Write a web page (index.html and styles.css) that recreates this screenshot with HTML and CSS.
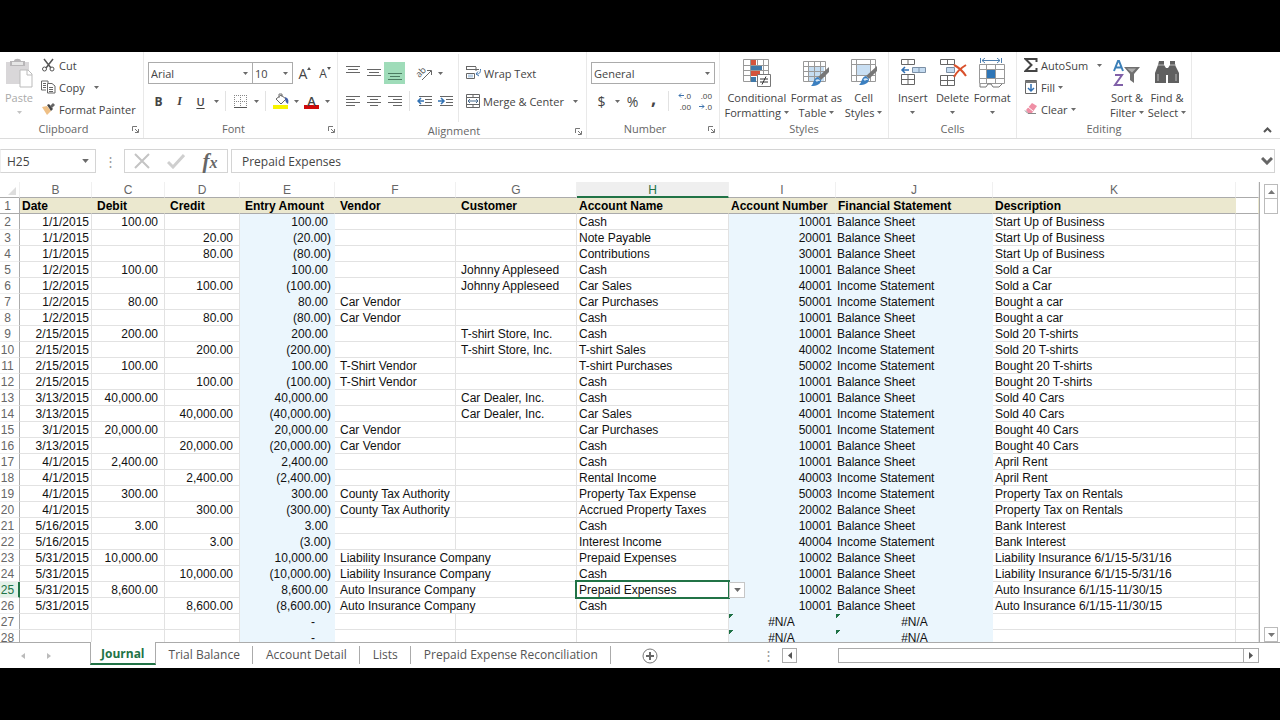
FILE: index.html
```html
<!DOCTYPE html>
<html lang="en">
<head>
<meta charset="utf-8">
<title>Journal</title>
<link rel="stylesheet" href="styles.css">
</head>
<body>
<svg class="defs" aria-hidden="true">
  <symbol id="down" viewBox="0 0 5 3"><path d="M0 0h5L2.500 3z" fill="#6a6a6a"/></symbol>
  <symbol id="launch" viewBox="0 0 7 7"><path d="M.5 5V.5H5M3 3l3 3M6.500 3v3.500H3" fill="none" stroke="#777"/></symbol>
  <symbol id="brush" viewBox="0 0 20 20"><path d="M19 0v5l-8 8-3-3z" fill="#777"/><path d="M8 10l3 3c0 4-4 6-10 6 3-2 2-8 7-9z" fill="#3b7fc0"/><path d="M6 14c1-1 3-1 3 0" stroke="#d5e6f5" stroke-width="2" fill="none"/></symbol>
</svg>
<main class="app">
  <section class="ribbon" aria-label="Home ribbon">
    <div class="group clipboard">
      <div class="group-body">
        <button class="big paste" disabled><svg width="28" height="30" viewBox="0 0 28 30"><path d="M1 4h23v22H1z" fill="#d9d7d9"/><path d="M5 3h4c0-3 7-3 7 0h4v5H5z" fill="#b8b6b8"/><path d="M7 4h11v3H7z" fill="#e6e6e6"/><path d="M15 12h8l4 4v13H15z" fill="#fff" stroke="#bbb"/><path d="M22 12v5h5" fill="none" stroke="#bbb"/></svg><span>Paste</span><svg class="arr"><use href="#down"/></svg></button>
        <div class="stack">
          <button class="small"><svg width="15" height="14" viewBox="0 0 15 14"><path d="M3 1l7 9M12 1L5 10" stroke="#555" stroke-width="1.500"/><circle cx="3.500" cy="11" r="2" fill="none" stroke="#555"/><circle cx="11" cy="11" r="2" fill="none" stroke="#555"/></svg>Cut</button>
          <button class="small"><svg width="15" height="14" viewBox="0 0 15 14"><path d="M7 3V1H.5v9H5M2 3.500h3M2 5.500h3M2 7.500h3" fill="none" stroke="#666"/><path d="M6.500 3.500H11L14 6v7H6.500z" fill="#fff" stroke="#666"/><path d="M8 7.500h4M8 9.500h4M8 11.500h4" stroke="#666"/></svg>Copy<svg class="arr gap"><use href="#down"/></svg></button>
          <button class="small"><svg width="15" height="14" viewBox="0 0 15 14"><path d="M1 5l5-1 4 5-4 4z" fill="#efc086"/><path d="M6 3l2-1 4 5-2 2z" fill="#444"/><path d="M9 4l3-3 2 2-3 3z" fill="#666"/></svg>Format Painter</button>
        </div>
      </div>
      <div class="group-label">Clipboard<svg class="launch"><use href="#launch"/></svg></div>
    </div>
    <div class="group font">
      <div class="rows">
        <div class="row">
          <span class="combo face"><select aria-label="Font"><option>Arial</option></select><svg class="arr"><use href="#down"/></svg></span>
          <span class="combo size"><select aria-label="Font size"><option>10</option></select><svg class="arr"><use href="#down"/></svg></span>
          <button class="ico" aria-label="Increase font size"><span class="grow">A</span><svg width="4" height="12" viewBox="0 0 4 12"><path d="M0 3h4L2 0z" fill="#555"/></svg></button>
          <button class="ico" aria-label="Decrease font size"><span class="shrink">A</span><svg width="4" height="12" viewBox="0 0 4 12"><path d="M0 0h4L2 3z" fill="#555"/></svg></button>
        </div>
        <div class="row">
          <button class="ico bold">B</button><button class="ico ital">I</button><button class="ico under">U</button><button class="drop" aria-label="Underline styles"><svg class="arr"><use href="#down"/></svg></button>
          <span class="sep"></span>
          <button class="ico" aria-label="Borders"><svg width="13" height="13" viewBox="0 0 13 13"><path d="M.5 0v12M6.500 0v12M12.500 0v12M0 .5h13M0 6.500h13" stroke="#888" stroke-dasharray="1 1"/><path d="M0 12.500h13" stroke="#555"/></svg></button><button class="drop" aria-label="Border styles"><svg class="arr"><use href="#down"/></svg></button>
          <span class="sep"></span>
          <button class="ico" aria-label="Fill colour"><svg width="16" height="16" viewBox="0 0 16 16"><path d="M3 6l5-4 5 4-5 5z" fill="#fff" stroke="#666"/><path d="M6 5V1h3v3" fill="none" stroke="#777"/><path d="M12 4c3 1 4 3 3 7-2-1-3-3-3-7z" fill="#4460a8"/><path d="M0 12h15v4H0z" fill="#f8f400"/></svg></button><button class="drop" aria-label="Fill colours"><svg class="arr"><use href="#down"/></svg></button>
          <button class="ico color" aria-label="Font colour">A</button><button class="drop" aria-label="Font colours"><svg class="arr"><use href="#down"/></svg></button>
        </div>
      </div>
      <div class="group-label">Font<svg class="launch"><use href="#launch"/></svg></div>
    </div>
    <div class="group align">
      <div class="group-body">
        <div class="rows left">
          <div class="row">
            <button class="ico" aria-label="Top align"><svg width="14" height="18" viewBox="0 0 14 18"><path d="M0 2.500h14M2 5.500h10M0 8.500h14" stroke="#666"/></svg></button><button class="ico" aria-label="Middle align"><svg width="14" height="18" viewBox="0 0 14 18"><path d="M0 5.500h14M2 8.500h10M0 11.500h14" stroke="#666"/></svg></button><button class="ico on" aria-label="Bottom align"><svg width="14" height="18" viewBox="0 0 14 18"><path d="M0 9.500h14M2 12.500h10M0 15.500h14" stroke="#4b7c62"/></svg></button>
            <span class="sep none"></span>
            <button class="ico" aria-label="Orientation"><svg width="18" height="18" viewBox="0 0 18 18"><text x="2" y="13" transform="rotate(-45 4 12)" class="ab">ab</text><path d="M6 16l9-9M15.500 11V6.500H11" fill="none" stroke="#666"/></svg></button><button class="drop" aria-label="Orientations"><svg class="arr"><use href="#down"/></svg></button>
          </div>
          <div class="row">
            <button class="ico" aria-label="Align left"><svg width="14" height="12" viewBox="0 0 14 12"><path d="M0 1.500h14M0 4.500h9M0 7.500h14M0 10.500h9" stroke="#666"/></svg></button><button class="ico" aria-label="Center"><svg width="14" height="12" viewBox="0 0 14 12"><path d="M0 1.500h14M3 4.500h8M0 7.500h14M3 10.500h8" stroke="#666"/></svg></button><button class="ico" aria-label="Align right"><svg width="14" height="12" viewBox="0 0 14 12"><path d="M0 1.500h14M5 4.500h9M0 7.500h14M5 10.500h9" stroke="#666"/></svg></button>
            <span class="sep"></span>
            <button class="ico" aria-label="Decrease indent"><svg width="15" height="12" viewBox="0 0 15 12"><path d="M2 1.500h13M8 4.500h7M8 7.500h7M2 10.500h13" stroke="#666"/><path d="M7 6H1M4 3L1 6l3 3" fill="none" stroke="#3272b4" stroke-width="1.500"/></svg></button><button class="ico" aria-label="Increase indent"><svg width="15" height="12" viewBox="0 0 15 12"><path d="M2 1.500h13M8 4.500h7M8 7.500h7M2 10.500h13" stroke="#666"/><path d="M0 6h6M3 3l3 3-3 3" fill="none" stroke="#3272b4" stroke-width="1.500"/></svg></button>
          </div>
        </div>
        <div class="rows right">
          <div class="row"><button class="small"><svg width="15" height="14" viewBox="0 0 15 14"><path d="M0 .5h10M.5 0v4M1 3.500h12M10 1v4M.5 7.500h8v5h-8z" fill="none" stroke="#666"/><path d="M2 8.500h5v3H2z" fill="#b8cfe6"/><path d="M14.500 3c0 4-1 5-4 5M12 5.500L10 8l3 2" fill="none" stroke="#3f74ae"/></svg>Wrap Text</button></div>
          <div class="row"><button class="small"><svg width="14" height="14" viewBox="0 0 14 14"><path d="M.5.5h13v13H.5zM0 3.500h14M0 10.500h14M7 0v3M7 11v3" fill="none" stroke="#666"/><path d="M2 7h10M4 5L2 7l2 2M10 5l2 2-2 2" fill="none" stroke="#45688c"/></svg>Merge &amp; Center<svg class="arr gap"><use href="#down"/></svg></button></div>
        </div>
      </div>
      <div class="group-label">Alignment<svg class="launch"><use href="#launch"/></svg></div>
    </div>
    <div class="group number">
      <div class="rows">
        <div class="row"><span class="combo format"><select aria-label="Number format"><option>General</option></select><svg class="arr"><use href="#down"/></svg></span></div>
        <div class="row">
          <button class="ico sym">$</button><button class="drop" aria-label="Currencies"><svg class="arr"><use href="#down"/></svg></button><button class="ico sym">%</button><button class="ico comma">,</button>
          <span class="sep"></span>
          <button class="ico dec" aria-label="Increase decimal"><span><svg width="6" height="5" viewBox="0 0 6 5"><path d="M6 2.500H1M3 .5l-2 2 2 2" fill="none" stroke="#3f74ae"/></svg>.0</span><span>.00</span></button><button class="ico dec" aria-label="Decrease decimal"><span>.00</span><span><svg width="6" height="5" viewBox="0 0 6 5"><path d="M0 2.500h5M3 .5l2 2-2 2" fill="none" stroke="#3f74ae"/></svg>.0</span></button>
        </div>
      </div>
      <div class="group-label">Number<svg class="launch"><use href="#launch"/></svg></div>
    </div>
    <div class="group styles">
      <div class="group-body">
        <button class="big cond"><svg width="30" height="30" viewBox="0 0 30 30"><path d="M1.500 1.500h25v22h-25zM1 7.500h26M1 12.500h26M1 17.500h26M8.500 1v22M15.500 1v22M21.500 1v22" fill="none" stroke="#999"/><path d="M9 2h5v5H9zM9 13h9v5H9z" fill="#d5533b"/><path d="M9 8h11v4H9zM9 19h5v5H9z" fill="#3f78a8"/><path d="M15.500 16.500h13v12h-13z" fill="#fff" stroke="#777"/><path d="M18 21h8M18 24h8M24 18.500l-4 8" stroke="#333"/></svg><span>Conditional</span><span>Formatting<svg class="arr"><use href="#down"/></svg></span></button>
        <button class="big fmt"><svg width="30" height="30" viewBox="0 0 30 30"><path d="M8 8h15v16H8z" fill="#c5ddf2"/><path d="M2.500 3.500h22v20h-22zM2 8.500h23M2 13.500h23M2 18.500h23M7.500 3v20M13.500 3v20M19.500 3v20" fill="none" stroke="#999"/><use href="#brush" x="9" y="9" width="20" height="20"/></svg><span>Format as</span><span>Table<svg class="arr"><use href="#down"/></svg></span></button>
        <button class="big cell"><svg width="30" height="30" viewBox="0 0 30 30"><path d="M8 7h14v10H8z" fill="#c9dff3"/><path d="M2.500 1.500h24v22h-24zM2 6.500h25M2 17.500h25M7.500 1v22M21.500 1v22" fill="none" stroke="#999"/><use href="#brush" x="9" y="8" width="20" height="20"/></svg><span>Cell</span><span>Styles<svg class="arr"><use href="#down"/></svg></span></button>
      </div>
      <div class="group-label">Styles</div>
    </div>
    <div class="group cells">
      <div class="group-body">
        <button class="big"><svg width="30" height="30" viewBox="0 0 30 30"><path d="M3.500 1.500h13v5h-13zM10 1v6M3.500 16.500h13v10h-13zM3 21.500h14M10 16v11" fill="none" stroke="#666"/><path d="M14.500 9.500h13v5h-13z" fill="#c3daf0" stroke="#7b8fa5"/><path d="M21 9v6" stroke="#7b8fa5"/><path d="M11 12H4M7 9l-3 3 3 3" fill="none" stroke="#2f6fb2" stroke-width="1.500"/></svg><span>Insert</span><svg class="arr low"><use href="#down"/></svg></button>
        <button class="big"><svg width="30" height="30" viewBox="0 0 30 30"><path d="M2.500 1.500h14v5h-14zM9.500 1v6M2.500 17.500h14v10h-14zM2 22.500h15M9.500 17v11" fill="none" stroke="#666"/><path d="M8.500 9.500h8v5h-8z" fill="#c3daf0" stroke="#7b8fa5"/><path d="M16 7c4 2 8 5 12 11M28 7c-5 3-9 6-12 12" fill="none" stroke="#d9512c" stroke-width="2"/></svg><span>Delete</span><svg class="arr low"><use href="#down"/></svg></button>
        <button class="big"><svg width="30" height="30" viewBox="0 0 30 30"><path d="M3.500 0v5M24.500 0v5M5 2.500h18M8 0L5 2.500 8 5M20 0l3 2.500L20 5" fill="none" stroke="#4e7fb0"/><path d="M2.500 6.500h25v19h-25zM2 11.500h26M2 20.500h26M9.500 6v20M18.500 6v20" fill="none" stroke="#999"/><path d="M10 12h8v8h-8z" fill="#2e75b6"/><path d="M3 26v3h6l2-3h3l2 3h6l3-3" fill="#fff" stroke="#777"/></svg><span>Format</span><svg class="arr low"><use href="#down"/></svg></button>
      </div>
      <div class="group-label">Cells</div>
    </div>
    <div class="group editing">
      <div class="group-body">
        <div class="stack">
          <button class="small"><svg width="14" height="14" viewBox="0 0 14 14"><path d="M12.500 4V1H1.500l6 6-6 6h11v-3" fill="none" stroke="#444" stroke-width="2"/></svg>AutoSum<svg class="arr gap"><use href="#down"/></svg></button>
          <button class="small"><svg width="14" height="14" viewBox="0 0 14 14"><path d="M1.500.5h11v13h-11z" fill="#fff" stroke="#666"/><path d="M1 1h12v2H1z" fill="#777"/><path d="M7 4v7M4 8l3 3 3-3" fill="none" stroke="#2f6fb2" stroke-width="1.500"/></svg>Fill<svg class="arr"><use href="#down"/></svg></button>
          <button class="small"><svg width="14" height="14" viewBox="0 0 14 14"><path d="M8 1l5 3-5 7H4L2 8z" fill="#ef8fa5"/><path d="M4 5l5 4" stroke="#fff"/><path d="M1 8.500l3 3h8" fill="none" stroke="#888"/></svg>Clear<svg class="arr"><use href="#down"/></svg></button>
        </div>
        <button class="big"><svg width="30" height="30" viewBox="0 0 30 30"><path d="M2 13L6 3h1l4 10M3.500 9.500h6" fill="none" stroke="#3b7fb8" stroke-width="2"/><path d="M3 17h7L3 27h8" fill="none" stroke="#8060a8" stroke-width="2"/><path d="M12 9h16l-6 7v9l-4-3v-6z" fill="#707070"/><path d="M15 10.500h9l-4 4z" fill="#ababab"/></svg><span>Sort &amp;</span><span>Filter<svg class="arr"><use href="#down"/></svg></span></button>
        <button class="big"><svg width="30" height="30" viewBox="0 0 30 30"><path d="M7 3h5v4l2 3v15H3V15l3-8zM18 3h5v4l4 8v10H16V10l2-3z" fill="#606060"/><path d="M13 10h4v7h-4z" fill="#606060"/><path d="M6 7h6M18 7h6M6 16v7M24 16v7" stroke="#bbb"/></svg><span>Find &amp;</span><span>Select<svg class="arr"><use href="#down"/></svg></span></button>
      </div>
      <div class="group-label">Editing</div>
    </div>
    <button class="collapse" aria-label="Collapse ribbon"><svg width="9" height="6" viewBox="0 0 9 6"><path d="M1 5l3.500-3.500L8 5" fill="none" stroke="#555" stroke-width="2"/></svg></button>
  </section>

  <section class="formula" aria-label="Formula bar">
    <span class="name-box"><input aria-label="Name box" value="H25"><svg class="arr wide"><use href="#down"/></svg></span>
    <span class="dots">⋮</span>
    <span class="fx-box">
      <button aria-label="Cancel"><svg width="16" height="16" viewBox="0 0 16 16"><path d="M1 1l14 14M15 1L1 15" stroke="#c4c4c4" stroke-width="2"/></svg></button>
      <button aria-label="Enter"><svg width="18" height="16" viewBox="0 0 18 16"><path d="M1 9l5 5L17 2" fill="none" stroke="#cfcfcf" stroke-width="3"/></svg></button>
      <button class="fx" aria-label="Insert function">f<small>x</small></button>
    </span>
    <span class="entry"><input aria-label="Formula" value="Prepaid Expenses"><svg width="12" height="8" viewBox="0 0 12 8"><path d="M1 1l5 5 5-5" fill="none" stroke="#666" stroke-width="3"/></svg></span>
  </section>

  <section class="workspace">
    <div class="sheet">
      <table>
        <colgroup><col class="c-row"><col class="c-b"><col class="c-c"><col class="c-d"><col class="c-e"><col class="c-f"><col class="c-f"><col class="c-h"><col class="c-i"><col class="c-j"><col class="c-k"><col></colgroup>
        <thead><tr><th><svg class="corner" width="8" height="8" viewBox="0 0 8 8"><path d="M8 0v8H0z" fill="#ddd"/></svg></th><th>B</th><th>C</th><th>D</th><th>E</th><th>F</th><th>G</th><th class="active">H</th><th>I</th><th>J</th><th>K</th><th></th></tr></thead>
        <tbody>
        <tr class="titles"><th>1<td>Date<td class="t">Debit<td class="t">Credit<td class="t">Entry Amount<td class="t">Vendor<td class="t">Customer<td>Account Name<td>Account Number<td>Financial Statement<td>Description<td class="blank"></tr>
        <tr><th>2<td class="d">1/1/2015<td class="a">100.00<td><td class="e">100.00<td><td><td>Cash<td class="i">10001<td class="j">Balance Sheet<td>Start Up of Business<td></tr>
        <tr><th>3<td class="d">1/1/2015<td><td class="a">20.00<td class="e neg">(20.00)<td><td><td>Note Payable<td class="i">20001<td class="j">Balance Sheet<td>Start Up of Business<td></tr>
        <tr><th>4<td class="d">1/1/2015<td><td class="a">80.00<td class="e neg">(80.00)<td><td><td>Contributions<td class="i">30001<td class="j">Balance Sheet<td>Start Up of Business<td></tr>
        <tr><th>5<td class="d">1/2/2015<td class="a">100.00<td><td class="e">100.00<td><td class="t">Johnny Appleseed<td>Cash<td class="i">10001<td class="j">Balance Sheet<td>Sold a Car<td></tr>
        <tr><th>6<td class="d">1/2/2015<td><td class="a">100.00<td class="e neg">(100.00)<td><td class="t">Johnny Appleseed<td>Car Sales<td class="i">40001<td class="j">Income Statement<td>Sold a Car<td></tr>
        <tr><th>7<td class="d">1/2/2015<td class="a">80.00<td><td class="e">80.00<td class="t">Car Vendor<td><td>Car Purchases<td class="i">50001<td class="j">Income Statement<td>Bought a car<td></tr>
        <tr><th>8<td class="d">1/2/2015<td><td class="a">80.00<td class="e neg">(80.00)<td class="t">Car Vendor<td><td>Cash<td class="i">10001<td class="j">Balance Sheet<td>Bought a car<td></tr>
        <tr><th>9<td class="d">2/15/2015<td class="a">200.00<td><td class="e">200.00<td><td class="t">T-shirt Store, Inc.<td>Cash<td class="i">10001<td class="j">Balance Sheet<td>Sold 20 T-shirts<td></tr>
        <tr><th>10<td class="d">2/15/2015<td><td class="a">200.00<td class="e neg">(200.00)<td><td class="t">T-shirt Store, Inc.<td>T-shirt Sales<td class="i">40002<td class="j">Income Statement<td>Sold 20 T-shirts<td></tr>
        <tr><th>11<td class="d">2/15/2015<td class="a">100.00<td><td class="e">100.00<td class="t">T-Shirt Vendor<td><td>T-shirt Purchases<td class="i">50002<td class="j">Income Statement<td>Bought 20 T-shirts<td></tr>
        <tr><th>12<td class="d">2/15/2015<td><td class="a">100.00<td class="e neg">(100.00)<td class="t">T-Shirt Vendor<td><td>Cash<td class="i">10001<td class="j">Balance Sheet<td>Bought 20 T-shirts<td></tr>
        <tr><th>13<td class="d">3/13/2015<td class="a">40,000.00<td><td class="e">40,000.00<td><td class="t">Car Dealer, Inc.<td>Cash<td class="i">10001<td class="j">Balance Sheet<td>Sold 40 Cars<td></tr>
        <tr><th>14<td class="d">3/13/2015<td><td class="a">40,000.00<td class="e neg">(40,000.00)<td><td class="t">Car Dealer, Inc.<td>Car Sales<td class="i">40001<td class="j">Income Statement<td>Sold 40 Cars<td></tr>
        <tr><th>15<td class="d">3/1/2015<td class="a">20,000.00<td><td class="e">20,000.00<td class="t">Car Vendor<td><td>Car Purchases<td class="i">50001<td class="j">Income Statement<td>Bought 40 Cars<td></tr>
        <tr><th>16<td class="d">3/13/2015<td><td class="a">20,000.00<td class="e neg">(20,000.00)<td class="t">Car Vendor<td><td>Cash<td class="i">10001<td class="j">Balance Sheet<td>Bought 40 Cars<td></tr>
        <tr><th>17<td class="d">4/1/2015<td class="a">2,400.00<td><td class="e">2,400.00<td><td><td>Cash<td class="i">10001<td class="j">Balance Sheet<td>April Rent<td></tr>
        <tr><th>18<td class="d">4/1/2015<td><td class="a">2,400.00<td class="e neg">(2,400.00)<td><td><td>Rental Income<td class="i">40003<td class="j">Income Statement<td>April Rent<td></tr>
        <tr><th>19<td class="d">4/1/2015<td class="a">300.00<td><td class="e">300.00<td class="t">County Tax Authority<td><td>Property Tax Expense<td class="i">50003<td class="j">Income Statement<td>Property Tax on Rentals<td></tr>
        <tr><th>20<td class="d">4/1/2015<td><td class="a">300.00<td class="e neg">(300.00)<td class="t">County Tax Authority<td><td>Accrued Property Taxes<td class="i">20002<td class="j">Balance Sheet<td>Property Tax on Rentals<td></tr>
        <tr><th>21<td class="d">5/16/2015<td class="a">3.00<td><td class="e">3.00<td><td><td>Cash<td class="i">10001<td class="j">Balance Sheet<td>Bank Interest<td></tr>
        <tr><th>22<td class="d">5/16/2015<td><td class="a">3.00<td class="e neg">(3.00)<td><td><td>Interest Income<td class="i">40004<td class="j">Income Statement<td>Bank Interest<td></tr>
        <tr><th>23<td class="d">5/31/2015<td class="a">10,000.00<td><td class="e">10,000.00<td class="t" colspan="2">Liability Insurance Company<td>Prepaid Expenses<td class="i">10002<td class="j">Balance Sheet<td>Liability Insurance 6/1/15-5/31/16<td></tr>
        <tr><th>24<td class="d">5/31/2015<td><td class="a">10,000.00<td class="e neg">(10,000.00)<td class="t" colspan="2">Liability Insurance Company<td>Cash<td class="i">10001<td class="j">Balance Sheet<td>Liability Insurance 6/1/15-5/31/16<td></tr>
        <tr class="current"><th>25<td class="d">5/31/2015<td class="a">8,600.00<td><td class="e">8,600.00<td class="t" colspan="2">Auto Insurance Company<td class="selected">Prepaid Expenses<button class="pick" aria-label="Choose account"><svg class="arr wide"><use href="#down"/></svg></button><td class="i">10002<td class="j">Balance Sheet<td>Auto Insurance 6/1/15-11/30/15<td></tr>
        <tr><th>26<td class="d">5/31/2015<td><td class="a">8,600.00<td class="e neg">(8,600.00)<td class="t" colspan="2">Auto Insurance Company<td>Cash<td class="i">10001<td class="j">Balance Sheet<td>Auto Insurance 6/1/15-11/30/15<td></tr>
        <tr><th>27<td><td><td><td class="e dash">-<td><td><td><td class="i na">#N/A<td class="j na">#N/A<td><td></tr>
        <tr><th>28<td><td><td><td class="e dash">-<td><td><td><td class="i na">#N/A<td class="j na">#N/A<td><td></tr>
        </tbody>
      </table>
    </div>
    <div class="vscroll">
      <button aria-label="Scroll up"><svg width="7" height="4" viewBox="0 0 7 4"><path d="M0 4h7L3.500 0z" fill="#777"/></svg></button>
      <span class="thumb"></span>
      <button class="end" aria-label="Scroll down"><svg width="7" height="4" viewBox="0 0 7 4"><path d="M0 0h7L3.500 4z" fill="#777"/></svg></button>
    </div>
  </section>

  <footer class="tabs">
    <div class="tab-nav">
      <button aria-label="Previous sheet"><svg width="4" height="6" viewBox="0 0 4 6"><path d="M4 0v6L0 3z" fill="#bbb"/></svg></button>
      <button aria-label="Next sheet"><svg width="4" height="6" viewBox="0 0 4 6"><path d="M0 0v6l4-3z" fill="#bbb"/></svg></button>
    </div>
    <button class="tab current-tab">Journal</button>
    <button class="tab">Trial Balance</button>
    <button class="tab">Account Detail</button>
    <button class="tab">Lists</button>
    <button class="tab">Prepaid Expense Reconciliation</button>
    <button class="add" aria-label="New sheet"><svg width="16" height="16" viewBox="0 0 16 16"><circle cx="8" cy="8" r="7" fill="none" stroke="#777"/><path d="M8 4v8M4 8h8" stroke="#666" stroke-width="2"/></svg></button>
    <div class="hscroll">
      <span class="dots">⋮</span>
      <button aria-label="Scroll left"><svg width="4" height="7" viewBox="0 0 4 7"><path d="M4 0v7L0 3.500z" fill="#555"/></svg></button>
      <span class="bar"></span>
      <button class="end" aria-label="Scroll right"><svg width="4" height="7" viewBox="0 0 4 7"><path d="M0 0v7l4-3.500z" fill="#555"/></svg></button>
    </div>
  </footer>
</main>
</body>
</html>
```
FILE: styles.css
```css
* { box-sizing: border-box; }
body {
  margin: 0;
  height: 100vh;
  padding: 52px 0;
  background: #000;
  display: flex;
  flex-direction: column;
  font: 11px/15px "Open Sans", "Noto Sans", sans-serif;
  color: #444;
}
button, input, select { font: inherit; color: inherit; border: 0; background: none; padding: 0; margin: 0; }
button { display: flex; align-items: center; justify-content: center; white-space: nowrap; }
svg { flex: none; display: block; }
.defs { position: absolute; width: 0; height: 0; }
.arr { width: 5px; height: 3px; }
.arr.wide { width: 7px; height: 4px; }
.launch { width: 7px; height: 7px; }
.app { flex: 1; min-height: 0; background: #fff; display: flex; flex-direction: column; }

/* Ribbon */
.ribbon { display: flex; border-bottom: 1px solid #dcdcdc; height: 87px; flex: none; }
.group { display: flex; flex-direction: column; border-right: 1px solid #e9e9e9; padding: 2px 4px 0; flex: none; }
.group-body { display: flex; height: 68px; }
.group-label { position: relative; text-align: center; color: #666; line-height: 18px; }
.group-label:has(.launch) { padding-right: 16px; }
.group-label .launch { position: absolute; right: 0; top: 6px; }
.clipboard { width: 144px; }
.font { width: 194px; padding-right: 2px; }
.align { width: 249px; }
.number { width: 133px; }
.styles { width: 169px; }
.cells { width: 128px; }
.editing { width: 175px; }
.stack { display: flex; flex-direction: column; }
.small { height: 22px; gap: 3px; justify-content: flex-start; }
.small .gap { margin-left: 6px; }
.clipboard .stack { padding-left: 7px; }
.big { flex-direction: column; justify-content: flex-start; padding-top: 4px; color: #444; }
.big > svg:first-child { margin-bottom: 2px; }
.big span { display: flex; align-items: center; gap: 3px; }
.big .low { margin-top: 6px; }
.paste { width: 30px; color: #aaa; }
.paste .arr { margin-top: 6px; opacity: 0.4; }
.cond { width: 66px; }
.fmt { width: 54px; }
.cell { width: 41px; }
.cells .big, .editing .big { width: 40px; }
.editing .stack { width: 86px; padding-left: 3px; }
.rows { display: flex; flex-direction: column; height: 68px; padding-top: 8px; gap: 6px; }
.row { display: flex; height: 22px; align-items: center; }
.ico { width: 21px; height: 22px; }
.drop { width: 10px; height: 22px; }
.sep { width: 9px; height: 20px; background: linear-gradient(#e2e2e2, #e2e2e2) center / 1px 100% no-repeat; }
.sep.none { background: none; }
.combo { display: flex; align-items: center; border: 1px solid #ababab; height: 22px; padding: 0 4px 0 2px; flex: none; }
.combo + .combo { border-left: 0; margin-right: 2px; }
.combo select { appearance: none; flex: 1; width: 0; outline: 0; }
.face { width: 105px; }
.size { width: 40px; }
.format { width: 124px; }
.grow { font-size: 14px; }
.shrink { font-size: 12px; }
.bold { font-weight: 700; font-size: 12px; }
.ital { font: italic 700 12px "Liberation Serif", serif; }
.under { font-weight: 600; text-decoration: underline; text-underline-offset: 2px; }
.color { font-weight: 600; font-size: 13px; line-height: 12px; background: linear-gradient(#d00a0a, #d00a0a) 3px 15px / 15px 4px no-repeat; }
.on { background: #9fdcb9; }
.ab { font: 9px "Open Sans", sans-serif; fill: #555; }
.left { width: 117px; border-right: 1px solid #e8e8e8; }
.right { padding-left: 7px; }
.sym { font-size: 14px; }
.comma { font-size: 18px; font-weight: 700; line-height: 10px; padding-bottom: 6px; }
.dec { flex-direction: column; align-items: flex-end; font-size: 8px; line-height: 11px; padding-right: 3px; }
.dec span { display: flex; align-items: center; }
.collapse { margin-left: auto; align-self: flex-end; width: 26px; height: 16px; }

/* Formula bar */
.formula { display: flex; align-items: center; padding: 10px 5px 9px 0; flex: none; font-size: 12px; }
.name-box, .fx-box, .entry { display: flex; align-items: center; height: 24px; border: 1px solid #d4d4d4; }
.name-box { width: 96px; padding: 0 6px; border-left-color: #eee; }
.name-box input, .entry input { flex: 1; width: 0; outline: 0; }
.dots { width: 28px; text-align: center; color: #999; font-size: 13px; }
.fx-box { width: 104px; margin-right: 3px; }
.fx-box button { flex: 1; }
.fx { font: italic 700 21px/20px "Liberation Serif", serif; color: #666; }
.fx small { font-size: 16px; margin-top: 4px; }
.entry { flex: 1; padding: 0 1px 0 10px; font-size: 12px; }

/* Sheet */
.workspace { display: flex; flex: 1; min-height: 0; }
.sheet { flex: 1; min-width: 0; overflow: hidden; border-right: 1px solid #ababab; font: 12px/13px "Liberation Sans", Arial, sans-serif; color: #111; }
table { table-layout: fixed; width: 100%; border-collapse: separate; border-spacing: 0; }
.c-row { width: 20px; }
.c-b { width: 72px; }
.c-c { width: 73px; }
.c-d { width: 75px; }
.c-e { width: 95px; }
.c-f { width: 121px; }
.c-h { width: 152px; }
.c-i { width: 107px; }
.c-j { width: 157px; }
.c-k { width: 243px; }
th, td { height: 16px; padding: 2px 0 0; white-space: nowrap; border-right: 1px solid #e2e2e2; border-bottom: 1px solid #e2e2e2; }
th { font-weight: 400; color: #666; text-align: center; }
thead th { border-right-color: #f0f0f0; border-bottom-color: #ababab; }
thead .active { background: #efefef; color: #217346; border-bottom: 2px solid #217346; line-height: 12px; }
.corner { margin-left: 8px; }
tbody th { border-right-color: #ababab; border-bottom-color: #eee; padding-right: 4px; }
td { padding-left: 2px; text-align: left; }
.titles td { font-weight: 700; color: #000; background: #ebe8cf; border-right-color: #ebe8cf; border-bottom-color: #ababab; }
.titles .blank { background: #fff; }
.titles th { border-bottom-color: #ababab; }
td.t { padding-left: 5px; }
.d, .a, .e, .i { text-align: right; }
.d { padding-right: 2px; }
.a, .e { padding-right: 6px; }
.e, .i, .j { background: #ebf6fd; border-color: #ebf6fd; }
.neg, .i { padding-right: 3px; }
.dash { padding-right: 19px; }
.j { padding-left: 1px; }
.na { text-align: center; background: linear-gradient(135deg, #1e7145 3px, transparent 3px) no-repeat #ebf6fd; }
.current th { color: #217346; background: #e3f1e8; border-right: 2px solid #217346; padding-right: 3px; }
.selected { position: relative; }
.selected::after { content: ""; position: absolute; inset: -2px -2px -2px -2px; border: 2px solid #217346; }
.pick { position: absolute; left: 100%; top: 0; width: 16px; height: 16px; margin-left: 1px; background: #fff; border: 1px solid #c6c6c6; z-index: 1; }
.vscroll { width: 20px; flex: none; display: flex; flex-direction: column; align-items: center; padding: 2px 0 0 2px; }
.vscroll button, .thumb { width: 14px; height: 15px; border: 1px solid #bbb; }
.vscroll .thumb { border-top: 0; }
.vscroll .end { margin-top: auto; }

/* Sheet tabs */
.tabs { display: flex; align-items: stretch; height: 26px; flex: none; border-top: 1px solid #ababab; font-size: 12px; }
.tab-nav { display: flex; width: 90px; padding-left: 10px; }
.tab-nav button { width: 26px; }
.tab { position: relative; padding: 0 13px 2px; color: #555; }
.tab:not(.current-tab)::after { content: ""; position: absolute; right: 0; top: 3px; bottom: 4px; border-right: 1px solid #ababab; }
.current-tab { font-weight: 700; color: #217346; background: #fff; margin: -1px 0 3px; padding: 2px 10px 0; border: 1px solid #ababab; border-width: 0 1px; border-bottom: 2px solid #217346; }
.add { width: 78px; }
.hscroll { flex: 1; display: flex; align-items: center; padding-right: 21px; }
.hscroll .dots { margin-left: auto; }
.hscroll button { width: 15px; height: 15px; border: 1px solid #ababab; }
.bar { width: 406px; height: 15px; border: 1px solid #ababab; margin-left: 41px; }
.hscroll .end { border-left: 0; }
```
